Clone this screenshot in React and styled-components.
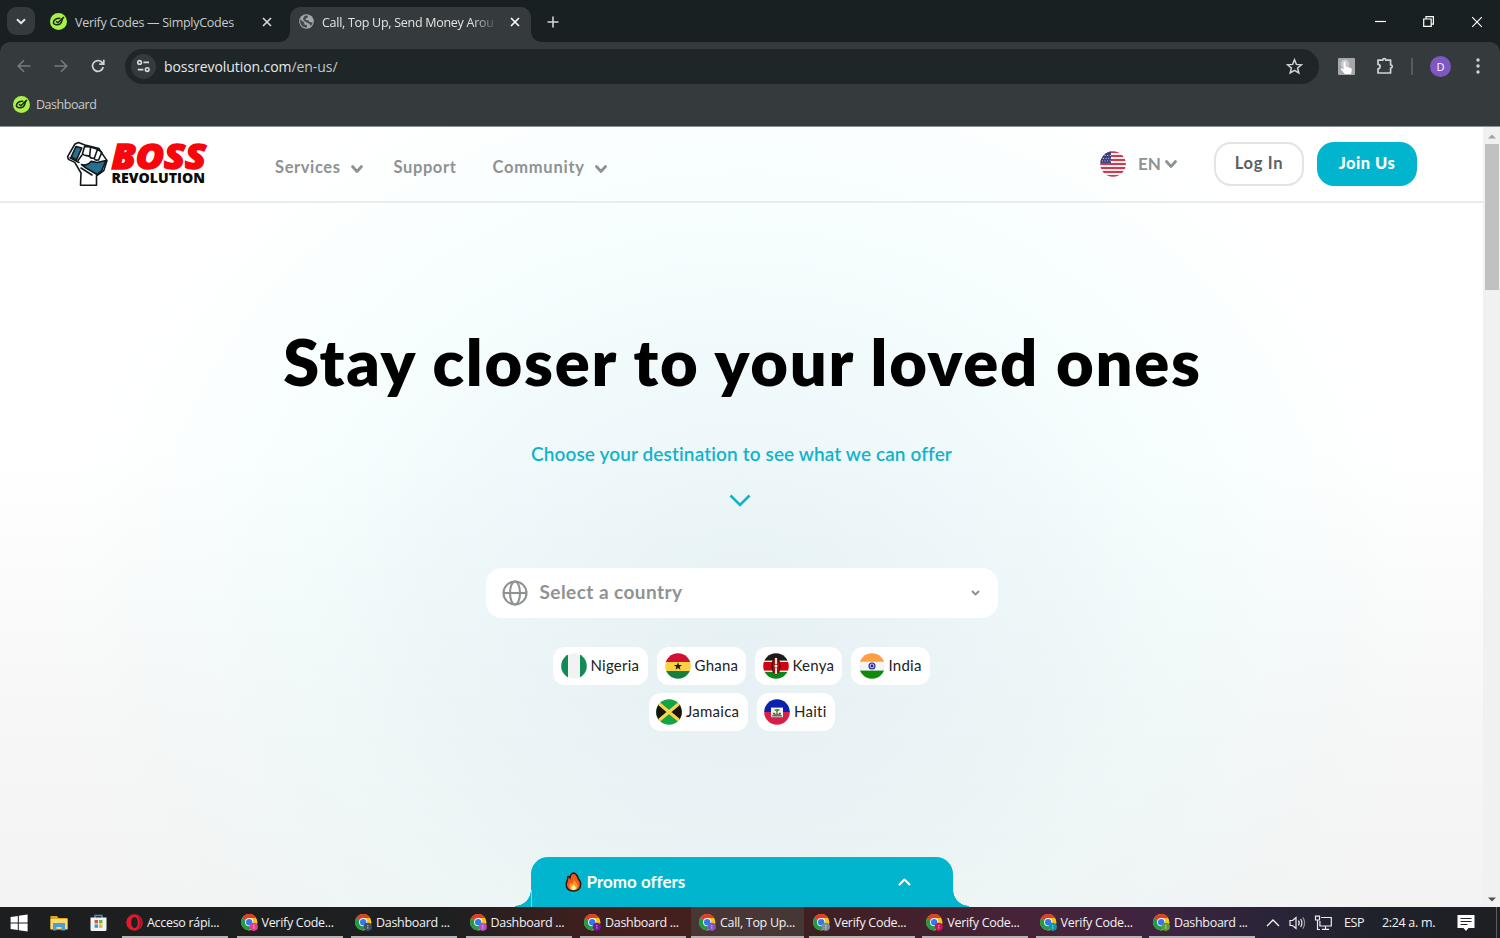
import React from 'react';
import styled, { createGlobalStyle } from 'styled-components';

const GlobalStyle = createGlobalStyle`
  * {
    box-sizing: border-box;
  }

  body {
    margin: 0;
    overflow: hidden;
    font-family: 'Lato', 'Liberation Sans', sans-serif;
    font-variant-ligatures: none;
  }

  svg {
    display: block;
    flex: none;
    overflow: visible;
  }
`;

const uiFont = "'Open Sans', 'Noto Sans', sans-serif";
const chrome = '#353b3c';
const strip = '#192021';
const cyan = '#02b5cf';

const Screen = styled.div`
  display: flex;
  flex-direction: column;
  width: 1500px;
  height: 938px;
  overflow: hidden;
  background: ${strip};
`;

/* browser frame */

const TabStrip = styled.div`
  display: flex;
  height: 42px;
  padding: 7px 17px 0 7px;
  background: ${strip};
  font-family: ${uiFont};
`;

const TabSearch = styled.div`
  display: flex;
  align-items: center;
  justify-content: center;
  width: 28px;
  height: 28px;
  border-radius: 9px;
  background: ${chrome};
`;

const Tab = styled.div`
  position: relative;
  display: flex;
  align-items: center;
  width: 241px;
  height: 35px;
  margin-left: ${({ $active }) => ($active ? 8 : 6)}px;
  padding: 0 ${({ $active }) => ($active ? 11 : 10)}px 6px 9px;
  gap: 8px;
  border-radius: 10px 10px 0 0;
  background: ${({ $active }) => ($active ? chrome : 'transparent')};
  color: ${({ $active }) => ($active ? '#e1e4e4' : '#c6cbcb')};

  &::before,
  &::after {
    content: '';
    display: ${({ $active }) => ($active ? 'block' : 'none')};
    position: absolute;
    bottom: 0;
    width: 10px;
    height: 10px;
  }

  &::before {
    left: -10px;
    background: radial-gradient(circle at 0 0, transparent 9.5px, ${chrome} 10px);
  }

  &::after {
    right: -10px;
    background: radial-gradient(circle at 100% 0, transparent 9.5px, ${chrome} 10px);
  }
`;

const TabTitle = styled.div`
  flex: 1;
  padding-top: 2px;
  font-size: 12.5px;
  line-height: 20px;
  letter-spacing: ${({ $spacing }) => $spacing}px;
  white-space: nowrap;
  mask-image: ${({ $fade }) => ($fade ? 'linear-gradient(90deg, #000 150px, transparent 176px)' : 'none')};
`;

const NewTab = styled.div`
  display: flex;
  align-items: center;
  height: 29px;
  margin-left: 16px;
`;

const WindowControls = styled.div`
  display: flex;
  align-items: center;
  height: 29px;
  margin-left: auto;
  gap: 37px;
`;

const Toolbar = styled.div`
  display: flex;
  align-items: center;
  height: 48px;
  padding-left: 5px;
  border-radius: 10px 10px 0 0;
  background: ${chrome};
  font-family: ${uiFont};
`;

const ToolButton = styled.div`
  display: flex;
  flex: none;
  align-items: center;
  justify-content: center;
  width: ${({ $width }) => $width || 37}px;
  color: ${({ $dim }) => ($dim ? '#767c7d' : '#cfd4d4')};
`;

const Omnibox = styled.div`
  display: flex;
  flex: none;
  align-items: center;
  width: 1194px;
  height: 35px;
  margin-left: 9px;
  padding: 0 16px 0 6px;
  border-radius: 18px;
  background: #1f2627;
`;

const SiteInfo = styled.div`
  display: flex;
  align-items: center;
  justify-content: center;
  width: 25px;
  height: 25px;
  border-radius: 50%;
  background: ${chrome};
`;

const Url = styled.div`
  flex: 1;
  margin-left: 8px;
  color: #e6eaea;
  font-size: 14px;
  letter-spacing: -0.07px;

  span {
    color: #c3c8c8;
  }
`;

const ToolDivider = styled.div`
  flex: none;
  width: 2px;
  height: 17px;
  margin: 0 17px 0 15px;
  background: #555c5d;
`;

const Avatar = styled.div`
  flex: none;
  width: 21px;
  height: 21px;
  margin-right: 5px;
  border-radius: 50%;
  background: #7e57c2;
  color: #fff;
  font-size: 11px;
  line-height: 21px;
  text-align: center;
`;

const Bookmarks = styled.div`
  display: flex;
  align-items: center;
  height: 36px;
  padding: 0 0 7px 13px;
  gap: 6px;
  background: ${chrome};
  color: #c6cbcb;
  font-family: ${uiFont};
  font-size: 12.5px;
  letter-spacing: -0.45px;
`;

/* web page */

const Viewport = styled.div`
  display: flex;
  height: 781px;
  border-top: 1px solid #8e9191;
  background: #fff;
`;

const Page = styled.div`
  display: flex;
  flex-direction: column;
  width: 1483px;
  background:
    radial-gradient(ellipse 680px 580px at 742px 480px, rgba(208, 231, 238, 0.46) 0%, rgba(215, 238, 243, 0.4) 35%, rgba(225, 250, 250, 0.3) 65%, rgba(240, 255, 255, 0) 100%),
    linear-gradient(#fff 0%, #fff 42%, #f7f7f7 75%, #f3f3f3 100%);
`;

const Header = styled.header`
  display: flex;
  align-items: center;
  height: 76px;
  padding: 0 66px;
  border-bottom: 2px solid #e9ecec;
`;

const Nav = styled.nav`
  display: flex;
  align-items: center;
  margin: 6px auto 0 66px;
  color: #8f9292;
`;

const NavItem = styled.div`
  display: flex;
  align-items: center;
  gap: 10px;
  width: ${({ $width }) => $width}px;
  font-size: 16.5px;
  font-weight: 700;
  line-height: 20px;
  letter-spacing: ${({ $spacing }) => $spacing || 0.6}px;

  svg {
    margin-top: 3px;
  }
`;

const Language = styled.div`
  display: flex;
  align-items: center;
  width: 114px;
  color: #8f9292;
  font-size: 17px;
  font-weight: 700;

  span {
    width: 27px;
    margin: 0 0 2px 12px;
  }
`;

const Button = styled.button`
  width: ${({ $primary }) => ($primary ? 100 : 90)}px;
  height: 44px;
  margin-left: ${({ $primary }) => ($primary ? 13 : 0)}px;
  padding: 0 0 2px;
  border: ${({ $primary }) => ($primary ? 'none' : '2px solid #e2e4e4')};
  border-radius: 17px;
  background: ${({ $primary }) => ($primary ? cyan : '#fff')};
  color: ${({ $primary }) => ($primary ? '#fff' : '#5d5f5f')};
  font-family: inherit;
  font-size: 16.5px;
  font-weight: ${({ $primary }) => ($primary ? 900 : 700)};
  letter-spacing: ${({ $primary }) => ($primary ? 0.5 : 0.7)}px;
`;

const Hero = styled.main`
  display: flex;
  flex: 1;
  flex-direction: column;
  align-items: center;
  padding-top: 118px;
`;

const Title = styled.h1`
  margin: 0;
  padding-left: 2px;
  color: #000;
  font-size: 65px;
  font-weight: 800;
  line-height: 80px;
  letter-spacing: 1.76px;
  white-space: nowrap;
`;

const Subtitle = styled.p`
  margin: 41px 0 28px;
  color: #0fb4ca;
  font-size: 19px;
  font-weight: 600;
  line-height: 24px;
  letter-spacing: 0.12px;
`;

const Pointer = styled.div`
  margin-right: 4px;
  color: #0fb4ca;
`;

const CountrySelect = styled.div`
  display: flex;
  align-items: center;
  width: 512px;
  height: 50px;
  margin-top: 60px;
  padding: 0 18px 0 16px;
  border-radius: 16px;
  background: #fff;
  color: #8f9292;
  font-size: 19px;
  font-weight: 700;
  letter-spacing: 0.45px;

  span {
    flex: 1;
    margin: 0 0 3px 12px;
  }
`;

const Chips = styled.div`
  display: flex;
  flex-direction: column;
  align-items: center;
  margin-top: 29px;
  gap: 8px;
`;

const ChipRow = styled.div`
  display: flex;
  gap: 9px;
`;

const Chip = styled.div`
  display: flex;
  align-items: center;
  width: ${({ $width }) => $width}px;
  height: 38px;
  padding-left: 7.5px;
  gap: 4px;
  border-radius: 12px;
  background: #fff;
  color: #222;
  font-size: 15px;
  line-height: 20px;
  letter-spacing: 0.25px;
  white-space: nowrap;

  span {
    padding-bottom: 3px;
  }
`;

const Promo = styled.div`
  position: relative;
  display: flex;
  align-items: center;
  width: 422px;
  height: 50px;
  margin-top: auto;
  padding: 0 42px 1px 34px;
  border-radius: 17px 17px 0 0;
  background: ${cyan};
  color: #fff;
  font-size: 17px;
  font-weight: 700;

  span {
    flex: 1;
    margin: 0 0 1px 5px;
  }

  &::before,
  &::after {
    content: '';
    position: absolute;
    bottom: 0;
    width: 16px;
    height: 17px;
  }

  &::before {
    left: -16px;
    border-right: 1px solid #7fd6e3;
    background: radial-gradient(circle at 0 0, transparent 15.5px, ${cyan} 16px);
  }

  &::after {
    right: -16px;
    background: radial-gradient(circle at 100% 0, transparent 15.5px, ${cyan} 16px);
  }
`;

const Scrollbar = styled.div`
  display: flex;
  flex-direction: column;
  align-items: center;
  justify-content: space-between;
  width: 17px;
  padding: 7px 0 5px;
  background: #f1f1f1;
`;

const Thumb = styled.div`
  width: 14px;
  height: 146px;
  margin: 5px 0 auto;
  background: #c1c1c1;
`;

/* windows taskbar */

const Taskbar = styled.div`
  display: flex;
  height: 31px;
  background: linear-gradient(90deg, #1d1e20 0, #1e1f21 450px, #3a1f1f 560px, #451f1c 640px, #3f2023 820px, #47233a 1040px, #3d2440 1160px, #2a2438 1270px, #20222b 1370px, #1d1f23 1500px);
  color: #f2f2f2;
  font-family: ${uiFont};
  font-size: 12.5px;
  letter-spacing: -0.3px;
`;

const Pinned = styled.div`
  display: flex;
  align-items: center;
  width: 122px;
  padding-left: 10px;
  gap: 22px;
`;

const Task = styled.div`
  display: flex;
  align-items: center;
  width: ${({ $active }) => ($active ? 113 : 106)}px;
  margin-right: ${({ $gap }) => $gap}px;
  padding: 1px 0 0 ${({ $active }) => ($active ? 8 : 4)}px;
  gap: 4px;
  border-bottom: 2px solid #b9b3b1;
  background: ${({ $active }) => ($active ? 'rgba(80, 90, 85, 0.4)' : 'transparent')};
  white-space: nowrap;
`;

const Tray = styled.div`
  display: flex;
  align-items: center;
  flex: 1;
  margin-left: 12px;
`;

const TrayItem = styled.div`
  width: ${({ $width }) => $width}px;
  white-space: nowrap;
`;

const ShowDesktop = styled.div`
  width: 1px;
  height: 31px;
  margin: 0 3px 0 auto;
  background: #5b5d60;
`;

/* icons */

const Stroke = ({ w, h, d, width = 1.5, box, ...rest }) => (
  <svg width={w} height={h} viewBox={box || `0 0 ${w} ${h}`} fill="none" stroke="currentColor" strokeWidth={width} {...rest}>
    <path d={d} />
  </svg>
);

const Close = ({ size = 10, color = '#d7dbdb', width = 1.6 }) => (
  <Stroke w={size} h={size} box="0 0 10 10" d="M1 1L9 9M9 1L1 9" width={width} color={color} />
);

const Chevron = ({ w = 12, h = 8, width = 2.8, up }) => (
  <Stroke
    w={w}
    h={h}
    width={width}
    strokeLinecap="round"
    strokeLinejoin="round"
    d={up ? `M1.5 ${h - 1.5}L${w / 2} 1.5L${w - 1.5} ${h - 1.5}` : `M1.5 1.5L${w / 2} ${h - 1.5}L${w - 1.5} 1.5`}
  />
);

const SimplyIcon = () => (
  <svg width="17" height="17" viewBox="0 0 17 17">
    <circle cx="8.5" cy="8.5" r="8.5" fill="#a8f04a" />
    <path d="M10.4 5.4C7.6 4.8 3.6 6.4 3.4 9.2C3.5 12 8 12.6 10.4 10.6C11.6 9.5 12 8 12.8 4.6" fill="none" stroke="#1c2a18" strokeWidth="1.5" />
    <path d="M6 8.2L7.8 9.8L14 4" fill="none" stroke="#1c2a18" strokeWidth="1.5" />
  </svg>
);

const GlobeFavicon = () => (
  <svg width="15" height="15" viewBox="0 0 15 15">
    <circle cx="7.5" cy="7.5" r="7.3" fill="#a1a8ae" />
    <path d="M1.2 5.2L5.2 8.6L5.4 10.4L8 11V13.4C4 14 1 10.6 1.2 7ZM5.8 1.8L9 1.4V3L7.4 4.2L6.2 6L9.2 6.2L10.6 8L13.6 8.6C13.3 10 12.6 11.2 11.5 12L10.5 9.8L7.6 8.4L4.6 6.4L4 4.2Z" fill="#434a4d" />
  </svg>
);

const Reload = () => (
  <svg width="16" height="16" viewBox="0 0 16 16" fill="none" stroke="currentColor" strokeWidth="1.7">
    <path d="M13.2 9A5.4 5.4 0 1 1 12 4.4L13.6 6" />
    <path d="M13.8 1.8V6.2H9.2" />
  </svg>
);

const Tune = () => (
  <svg width="15" height="14" viewBox="0 0 15 14" fill="none" stroke="#d5dada" strokeWidth="1.6">
    <circle cx="3.6" cy="3.4" r="1.8" />
    <path d="M7.4 3.4H13M1.8 10.6H7.4" />
    <circle cx="11.2" cy="10.6" r="1.8" />
  </svg>
);

const ClickExtension = () => (
  <svg width="17" height="17" viewBox="0 0 17 17">
    <rect width="17" height="17" rx="1" fill="#a6a7a9" />
    <circle cx="7" cy="6" r="4.4" fill="#c9cacb" />
    <path d="M5.6 4.6C5.6 3.4 7.6 3.4 7.6 4.6V8.6L12.2 9.8C13.6 10.2 14 11 13.8 12.2L13 16H6.8L3 11.6C2.6 10.6 3.8 10 4.6 10.6L5.6 11.4Z" fill="#fff" />
  </svg>
);

const Puzzle = () => (
  <svg width="18" height="18" viewBox="0 0 18 18" fill="none" stroke="currentColor" strokeWidth="1.7" strokeLinejoin="round">
    <path d="M2 3.2H6.8C6.8 1.2 9.8 1.2 9.8 3.2H14.6V8C16.8 8 16.8 11 14.6 11V16H2V11.8C4.8 11.8 4.8 7.4 2 7.4Z" />
  </svg>
);

const Logo = () => (
  <svg width="143" height="46" viewBox="0 0 143 46">
    <g stroke="#10171b" strokeWidth="1.6" strokeLinejoin="round" strokeLinecap="round">
      <path d="M9 3L12.6 1.6L20 4.4L33 7.6L36 12.4L41 19.6L37.8 29.5L30.5 34.8V44.2H14.5L15 32L8.8 21.4L2.4 18.4L1.6 15.6Z" fill="#fff" />
      <path d="M10 5.6L15.8 7L10.4 19L5.2 15.8Z" fill="#25708f" />
      <path d="M15.5 23.5C19 25 23 23 25 20.4L31 21.5L40 19.5L35.5 30L31 33.5L20 27Z" fill="#25708f" />
      <path d="M16.5 12.5L18.6 5.4L24.6 6L23.6 15.5M24.6 6L31.5 8.2L28.2 17.4M31.5 8.2L35.8 11.4L32.6 19M16.5 12.5C18 15.5 21 14 23.6 15.5C25 18 27 17 28.2 17.4C29 20 31.5 19 32.6 19M12 19.4L16 14" fill="none" />
      <path d="M4 16.8L13 21.5M15 27L26 34" fill="none" />
    </g>
    <g fontFamily="'Open Sans', sans-serif" fontWeight="800">
      <text x="45.5" y="28.4" fontSize="34.5" fontStyle="italic" fill="#f8060b" stroke="#f8060b" strokeWidth="1.5" textLength="94.5" lengthAdjust="spacingAndGlyphs">BOSS</text>
      <text x="45.5" y="42.4" fontSize="14" fill="#0b0b0b" textLength="93.5" lengthAdjust="spacingAndGlyphs">REVOLUTION</text>
    </g>
  </svg>
);

const GlobeIcon = () => (
  <svg width="26" height="26" viewBox="0 0 26 26" fill="none" stroke="currentColor" strokeWidth="2.1">
    <circle cx="13" cy="13" r="11.5" />
    <ellipse cx="13" cy="13" rx="5" ry="11.5" />
    <path d="M1.5 13H24.5" />
  </svg>
);

const Fire = () => (
  <svg width="17" height="20" viewBox="0 0 17 20">
    <path d="M8.6 1C12.4 2 12.8 5.2 13.4 7C15 8.4 15.8 10.2 15.6 13C15.2 17 12.2 19 8.4 19C4.4 19 1.4 16.8 1.2 12.8C1.2 9.6 3 8.4 2.8 4.6C4 4.2 4.6 4.8 5 5.6C5.4 3.2 6.6 1.2 8.6 1Z" fill="#f4581b" stroke="#231a16" strokeWidth="1.5" />
    <path d="M9.4 7C9.4 10 12.8 11 12.6 14.4C12.4 17 10.6 18 8.4 18C5.8 18 4.2 16.6 4.2 14.2C4.2 12.6 5 11.8 5.4 10.8L6.8 12C8.4 10.6 9.2 9 9.4 7Z" fill="#fd9a2b" />
    <path d="M8.6 12C9 13.4 11 14 10.8 16.2C10.6 17.6 9.4 18 8.2 18C7 18 5.8 17.2 6 15.6C6.4 14.4 8.2 13.8 8.6 12Z" fill="#fff08a" />
  </svg>
);

const flagArt = {
  Nigeria: (
    <>
      <rect width="26" height="26" fill="#f1f2f2" />
      <path d="M0 0H7V26H0ZM19 0H26V26H19Z" fill="#118a57" />
    </>
  ),
  Ghana: (
    <>
      <rect width="26" height="9" fill="#d21034" />
      <rect y="9" width="26" height="9" fill="#fcd144" />
      <rect y="18" width="26" height="8" fill="#15803d" />
      <path d="M13 9.2L14 12.1H17L14.6 13.9L15.5 16.8L13 15L10.5 16.8L11.4 13.9L9 12.1H12Z" fill="#1b1a12" />
    </>
  ),
  Kenya: (
    <>
      <rect width="26" height="26" fill="#f6f6f6" />
      <rect width="26" height="7.6" fill="#1c1c1c" />
      <rect y="9" width="26" height="8.6" fill="#d2040e" />
      <rect y="19" width="26" height="7" fill="#0c8618" />
      <ellipse cx="13" cy="13" rx="4" ry="8.4" fill="#a80d12" />
      <path d="M10.4 6.5C8.6 10 8.6 16 10.4 19.5M15.6 6.5C17.4 10 17.4 16 15.6 19.5" fill="none" stroke="#2b0708" strokeWidth="1" />
      <path d="M13 5V11M13 15V21" stroke="#fff" strokeWidth="1.7" />
      <circle cx="13" cy="13" r="1.5" fill="#fff" />
    </>
  ),
  India: (
    <>
      <rect width="26" height="26" fill="#f4f4f6" />
      <rect width="26" height="8.7" fill="#fd9e41" />
      <rect y="17.6" width="26" height="8.4" fill="#118a0c" />
      <circle cx="13" cy="13" r="3" fill="#c3c2e6" stroke="#28289c" strokeWidth="1.1" />
      <circle cx="13" cy="13" r="1.4" fill="#28289c" />
    </>
  ),
  Jamaica: (
    <>
      <rect width="26" height="26" fill="#12a443" />
      <path d="M0 3L12 13L0 23ZM26 3L14 13L26 23Z" fill="#16150f" />
      <path d="M1 3L25 23M25 3L1 23" stroke="#fcd34d" strokeWidth="3.2" />
    </>
  ),
  Haiti: (
    <>
      <rect width="26" height="13" fill="#0b23ac" />
      <rect y="13" width="26" height="13" fill="#d91f47" />
      <rect x="7" y="8.6" width="12" height="9.6" fill="#f2f3f3" />
      <path d="M7.6 17.6C8.6 13.6 17.4 13.6 18.4 17.6Z" fill="#65735c" />
      <path d="M13 10V15" stroke="#3b7c38" strokeWidth="1.6" />
      <path d="M10.6 11.2H15.4" stroke="#668b3c" strokeWidth="1.8" />
      <path d="M9 14.4H11M15 14.4H17" stroke="#4458ad" strokeWidth="1.4" />
      <circle cx="13" cy="13.8" r="1" fill="#c9a23b" />
    </>
  ),
  USA: (
    <>
      <rect width="26" height="26" fill="#f7eef0" />
      <path d="M0 1H26M0 5H26M0 9H26M0 13H26M0 17H26M0 21H26M0 25H26" stroke="#cf3a50" strokeWidth="2" />
      <rect width="11" height="12" fill="#3d3f7d" />
      <path d="M2 4.5H11M3 7.5H11M2 10H11" stroke="#c9cbe2" strokeWidth="1" strokeDasharray="1 1.6" />
    </>
  ),
};

const Flag = ({ name }) => (
  <svg width="26" height="26" viewBox="0 0 26 26">
    <clipPath id={`clip-${name}`}>
      <circle cx="13" cy="13" r="12.8" />
    </clipPath>
    <g clipPath={`url(#clip-${name})`}>{flagArt[name]}</g>
  </svg>
);

const ChromeIcon = ({ badge }) => (
  <svg width="17" height="17" viewBox="0 0 17 17">
    <circle cx="8.2" cy="8.2" r="8.2" fill="#fbc117" />
    <path d="M8.2 8.2L1.1 4.1A8.2 8.2 0 0 1 15.3 4.1H8.2Z" fill="#e33b2e" />
    <path d="M8.2 8.2L1.1 4.1A8.2 8.2 0 0 0 8.2 16.4L11.8 10.2Z" fill="#229a48" />
    <circle cx="8.2" cy="8.2" r="4.1" fill="#fff" />
    <circle cx="8.2" cy="8.2" r="3.2" fill="#3478ea" />
    <circle cx="12.8" cy="12.8" r="4.1" fill={badge} />
    <path d="M12.8 11V12.4M12.8 13.2V14.6" stroke="#fff" strokeOpacity="0.65" />
  </svg>
);

const OperaIcon = () => (
  <svg width="17" height="17" viewBox="0 0 17 17">
    <circle cx="8.5" cy="8.5" r="8.3" fill="#e21b2c" />
    <path d="M10.5 1A8 8 0 0 1 10.5 16C15 13 15 4 10.5 1Z" fill="#a31222" />
    <ellipse cx="8.5" cy="8.5" rx="3.3" ry="5.6" fill="#1e1f21" />
  </svg>
);

const WindowsIcon = () => (
  <svg width="18" height="18" viewBox="0 0 18 18" fill="#fff">
    <path d="M0.6 3L7.8 1.9V8.5H0.6ZM8.8 1.7L17.6 0.4V8.5H8.8ZM0.6 9.5H7.8V16.1L0.6 15ZM8.8 9.5H17.6V17.6L8.8 16.3Z" />
  </svg>
);

const FolderIcon = () => (
  <svg width="18" height="16" viewBox="0 0 18 16">
    <path d="M0.5 1H7L8.5 3H17.5V14H0.5Z" fill="#e0a526" />
    <path d="M0.5 4H17.5V14.5H0.5Z" fill="#fbd96d" />
    <path d="M3 8H15V15.5H11.5V12H6.5V15.5H3Z" fill="#4a9fd3" />
  </svg>
);

const StoreIcon = () => (
  <svg width="17" height="18" viewBox="0 0 17 18">
    <path d="M5 4V1.5H12V4" fill="none" stroke="#3c9cc9" strokeWidth="1.4" />
    <path d="M0.5 3.5H16.5V15.5Q16.5 17 15 17H2Q0.5 17 0.5 15.5Z" fill="#f1f3f4" />
    <path d="M4.6 6H8V9.4H4.6Z" fill="#e5532d" />
    <path d="M9 6H12.4V9.4H9Z" fill="#75b629" />
    <path d="M4.6 10.4H8V13.8H4.6Z" fill="#2a9fe0" />
    <path d="M9 10.4H12.4V13.8H9Z" fill="#f3b61d" />
  </svg>
);

const SpeakerIcon = () => (
  <svg width="18" height="16" viewBox="0 0 18 16" fill="none" stroke="#ededf0" strokeWidth="1.2">
    <path d="M0 5.5H2.6L6 2.5V13.5L2.6 10.5H0Z" />
    <path d="M8.4 5.6C9.4 7 9.4 9 8.4 10.4M10.6 4C12.2 6.4 12.2 9.6 10.6 12" />
    <path d="M12.8 2.4C15.2 5.6 15.2 10.4 12.8 13.6" strokeOpacity="0.55" />
  </svg>
);

const NetworkIcon = () => (
  <svg width="18" height="16" viewBox="0 0 18 16" fill="none" stroke="#ededf0" strokeWidth="1.2">
    <path d="M6 2.5H16.3V11H4.9V6M10.5 11V14M6.9 14.4H14.1M0.5 1.2H4.5V5H0.5ZM2.5 5V14.5H5" />
  </svg>
);

const MessageIcon = () => (
  <svg width="18" height="18" viewBox="0 0 18 18">
    <path d="M0.5 1H17.5V14H11.5L9 17L6.5 14H0.5Z" fill="#fff" />
    <path d="M3.5 4.5H14.5M3.5 7.5H14.5M3.5 10.5H10.5" stroke="#24252b" strokeWidth="1.1" />
  </svg>
);

const chipRows = [
  [['Nigeria', 95], ['Ghana', 89], ['Kenya', 87], ['India', 79]],
  [['Jamaica', 99], ['Haiti', 78]],
];

const tasks = [
  { label: 'Acceso rápi...', gap: 8.5 },
  { label: 'Verify Code...', badge: '#e0408a', gap: 8.5 },
  { label: 'Dashboard ...', badge: '#3d5166', gap: 8.5 },
  { label: 'Dashboard ...', badge: '#b04fc0', gap: 8.5 },
  { label: 'Dashboard ...', badge: '#6a1b9a', gap: 5 },
  { label: 'Call, Top Up...', badge: '#7e57c2', gap: 5, active: true },
  { label: 'Verify Code...', badge: '#78909c', gap: 7.3 },
  { label: 'Verify Code...', badge: '#c2185b', gap: 7.3 },
  { label: 'Verify Code...', badge: '#1296a8', gap: 7.3 },
  { label: 'Dashboard ...', badge: '#5d9e36', gap: 0 },
];

const BrowserFrame = () => (
  <>
    <TabStrip>
      <TabSearch>
        <Stroke w={10} h={7} d="M1 1.2L5 5.2L9 1.2" width={2} color="#e4e7e7" />
      </TabSearch>
      <Tab>
        <SimplyIcon />
        <TabTitle $spacing={-0.28}>Verify Codes — SimplyCodes</TabTitle>
        <Close />
      </Tab>
      <Tab $active>
        <GlobeFavicon />
        <TabTitle $spacing={-0.28} $fade>
          Call, Top Up, Send Money Arou
        </TabTitle>
        <Close color="#fff" />
      </Tab>
      <NewTab>
        <Stroke w={12} h={12} d="M6 0.5V11.5M0.5 6H11.5" width={1.6} color="#cfd4d4" />
      </NewTab>
      <WindowControls>
        <Stroke w={11} h={11} d="M0 5.5H11" width={1.2} color="#fff" />
        <Stroke w={11} h={11} d="M0.7 3H8.2V10.4H0.7ZM3 3V0.7H10.4V8.2H8.2" width={1.2} color="#fff" />
        <Close size={12} color="#fff" width={1} />
      </WindowControls>
    </TabStrip>
    <Toolbar>
      <ToolButton $dim>
        <Stroke w={14} h={14} d="M13.4 7H1.4M7 1.2L1.2 7L7 12.8" width={1.6} />
      </ToolButton>
      <ToolButton $dim>
        <Stroke w={14} h={14} d="M0.6 7H12.6M7 1.2L12.8 7L7 12.8" width={1.6} />
      </ToolButton>
      <ToolButton>
        <Reload />
      </ToolButton>
      <Omnibox>
        <SiteInfo>
          <Tune />
        </SiteInfo>
        <Url>
          bossrevolution.com<span>/en-us/</span>
        </Url>
        <Stroke
          w={17}
          h={17}
          d="M8.5 1.8L10.4 6.4L15.4 6.8L11.6 10L12.8 15L8.5 12.3L4.2 15L5.4 10L1.6 6.8L6.6 6.4Z"
          width={1.5}
          color="#cfd4d4"
        />
      </Omnibox>
      <ToolButton $width={55}>
        <ClickExtension />
      </ToolButton>
      <ToolButton $width={22}>
        <Puzzle />
      </ToolButton>
      <ToolDivider />
      <Avatar>D</Avatar>
      <ToolButton $width={44}>
        <svg width="4" height="16" viewBox="0 0 4 16" fill="currentColor">
          <circle cx="2" cy="2" r="1.7" />
          <circle cx="2" cy="8" r="1.7" />
          <circle cx="2" cy="14" r="1.7" />
        </svg>
      </ToolButton>
    </Toolbar>
    <Bookmarks>
      <SimplyIcon />
      Dashboard
    </Bookmarks>
  </>
);

const SiteHeader = () => (
  <Header>
    <Logo />
    <Nav>
      <NavItem $width={118.5}>
        Services <Chevron />
      </NavItem>
      <NavItem $width={99}>Support</NavItem>
      <NavItem $width={116} $spacing={0.75}>
        Community <Chevron />
      </NavItem>
    </Nav>
    <Language>
      <Flag name="USA" />
      <span>EN</span>
      <Chevron />
    </Language>
    <Button>Log In</Button>
    <Button $primary>Join Us</Button>
  </Header>
);

const App = () => (
  <Screen>
    <GlobalStyle />
    <BrowserFrame />
    <Viewport>
      <Page>
        <SiteHeader />
        <Hero>
          <Title>Stay closer to your loved ones</Title>
          <Subtitle>Choose your destination to see what we can offer</Subtitle>
          <Pointer>
            <Stroke w={24} h={14} d="M2.5 1.5L12 11L21.5 1.5" width={2.6} />
          </Pointer>
          <CountrySelect>
            <GlobeIcon />
            <span>Select a country</span>
            <Chevron w={9} h={6} width={2} />
          </CountrySelect>
          <Chips>
            {chipRows.map((row) => (
              <ChipRow key={row[0][0]}>
                {row.map(([name, width]) => (
                  <Chip key={name} $width={width}>
                    <Flag name={name} />
                    <span>{name}</span>
                  </Chip>
                ))}
              </ChipRow>
            ))}
          </Chips>
          <Promo>
            <Fire />
            <span>Promo offers</span>
            <Chevron w={13} h={8} width={2} up />
          </Promo>
        </Hero>
      </Page>
      <Scrollbar>
        <svg width="8" height="5" viewBox="0 0 8 5">
          <path d="M0 4.5L4 0.5L8 4.5Z" fill="#a3a3a3" />
        </svg>
        <Thumb />
        <svg width="8" height="5" viewBox="0 0 8 5">
          <path d="M0 0.5L4 4.5L8 0.5Z" fill="#505050" />
        </svg>
      </Scrollbar>
    </Viewport>
    <Taskbar>
      <Pinned>
        <WindowsIcon />
        <FolderIcon />
        <StoreIcon />
      </Pinned>
      {tasks.map(({ label, badge, gap, active }, i) => (
        <Task key={i} $gap={gap} $active={active}>
          {badge ? <ChromeIcon badge={badge} /> : <OperaIcon />}
          {label}
        </Task>
      ))}
      <Tray>
        <TrayItem $width={23}>
          <Stroke w={14} h={8} d="M0 7L6 1L12 7" width={1.4} />
        </TrayItem>
        <TrayItem $width={25}>
          <SpeakerIcon />
        </TrayItem>
        <TrayItem $width={29}>
          <NetworkIcon />
        </TrayItem>
        <TrayItem $width={38}>ESP</TrayItem>
        <TrayItem $width={75}>2:24 a. m.</TrayItem>
        <MessageIcon />
        <ShowDesktop />
      </Tray>
    </Taskbar>
  </Screen>
);

export default App;
